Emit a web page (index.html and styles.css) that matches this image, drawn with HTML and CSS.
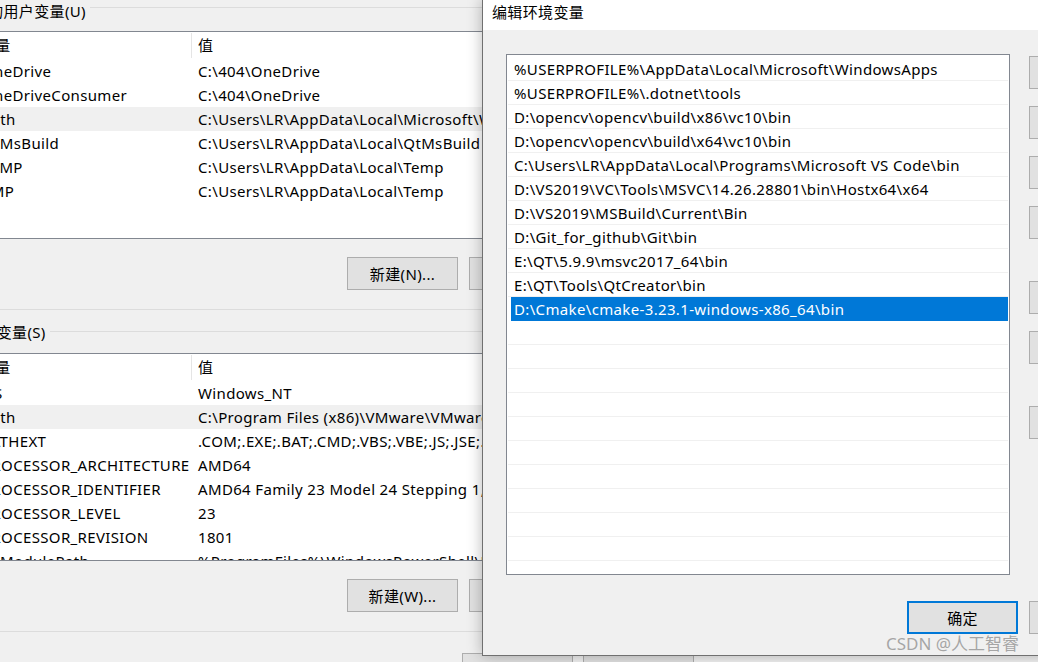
FILE: index.html
```html
<!DOCTYPE html>
<html lang="zh-CN">
<head>
  <meta charset="UTF-8" />
  <title>编辑环境变量</title>
  <link rel="stylesheet" href="styles.css">
</head>
<body>
  <div class="envwin">
    <section class="group">
      <div class="group-head">
        <span class="group-label">LR 的用户变量(U)</span>
        <span class="group-rule"></span>
      </div>
      <div class="var-list">
        <div class="var-row var-head"><span>变量</span><span>值</span></div>
        <div class="var-row"><span>OneDrive</span><span>C:\404\OneDrive</span></div>
        <div class="var-row"><span>OneDriveConsumer</span><span>C:\404\OneDrive</span></div>
        <div class="var-row current"><span>Path</span><span>C:\Users\LR\AppData\Local\Microsoft\WindowsApps;%USERPROFILE%\.dotnet\tools</span></div>
        <div class="var-row"><span>QtMsBuild</span><span>C:\Users\LR\AppData\Local\QtMsBuild</span></div>
        <div class="var-row"><span>TEMP</span><span>C:\Users\LR\AppData\Local\Temp</span></div>
        <div class="var-row"><span>TMP</span><span>C:\Users\LR\AppData\Local\Temp</span></div>
      </div>
      <div class="group-buttons">
        <button>新建(N)...</button>
        <button>编辑(E)...</button>
        <button>删除(D)</button>
      </div>
    </section>

    <section class="group system">
      <div class="group-head">
        <span class="group-label">系统变量(S)</span>
        <span class="group-rule"></span>
      </div>
      <div class="var-list">
        <div class="var-row var-head"><span>变量</span><span>值</span></div>
        <div class="var-row"><span>OS</span><span>Windows_NT</span></div>
        <div class="var-row current"><span>Path</span><span>C:\Program Files (x86)\VMware\VMware Workstation\bin\;C:\Windows\system32</span></div>
        <div class="var-row"><span>PATHEXT</span><span>.COM;.EXE;.BAT;.CMD;.VBS;.VBE;.JS;.JSE;.WSF;.WSH;.MSC</span></div>
        <div class="var-row"><span>PROCESSOR_ARCHITECTURE</span><span>AMD64</span></div>
        <div class="var-row"><span>PROCESSOR_IDENTIFIER</span><span>AMD64 Family 23 Model 24 Stepping 1, AuthenticAMD</span></div>
        <div class="var-row"><span>PROCESSOR_LEVEL</span><span>23</span></div>
        <div class="var-row"><span>PROCESSOR_REVISION</span><span>1801</span></div>
        <div class="var-row"><span>PSModulePath</span><span>%ProgramFiles%\WindowsPowerShell\Modules;C:\Windows\system32</span></div>
      </div>
      <div class="group-buttons">
        <button>新建(W)...</button>
        <button>编辑(I)...</button>
        <button>删除(L)</button>
      </div>
    </section>

    <div class="env-footer">
      <button>确定</button>
      <button>取消</button>
    </div>
  </div>

  <div class="dialog">
    <div class="dialog-title">编辑环境变量</div>
    <div class="dialog-body">
      <div class="path-list">
        <div class="path-row">%USERPROFILE%\AppData\Local\Microsoft\WindowsApps</div>
        <div class="path-row">%USERPROFILE%\.dotnet\tools</div>
        <div class="path-row">D:\opencv\opencv\build\x86\vc10\bin</div>
        <div class="path-row">D:\opencv\opencv\build\x64\vc10\bin</div>
        <div class="path-row">C:\Users\LR\AppData\Local\Programs\Microsoft VS Code\bin</div>
        <div class="path-row">D:\VS2019\VC\Tools\MSVC\14.26.28801\bin\Hostx64\x64</div>
        <div class="path-row">D:\VS2019\MSBuild\Current\Bin</div>
        <div class="path-row">D:\Git_for_github\Git\bin</div>
        <div class="path-row">E:\QT\5.9.9\msvc2017_64\bin</div>
        <div class="path-row">E:\QT\Tools\QtCreator\bin</div>
        <div class="path-row selected">D:\Cmake\cmake-3.23.1-windows-x86_64\bin</div>
        <div class="path-row"></div>
        <div class="path-row"></div>
        <div class="path-row"></div>
        <div class="path-row"></div>
        <div class="path-row"></div>
        <div class="path-row"></div>
        <div class="path-row"></div>
        <div class="path-row"></div>
        <div class="path-row"></div>
        <div class="path-row"></div>
        <div class="path-row"></div>
      </div>
      <div class="side-buttons">
        <button>新建(N)</button>
        <button>编辑(E)</button>
        <button>浏览(B)...</button>
        <button>删除(D)</button>
        <button class="spaced">上移(U)</button>
        <button>下移(O)</button>
        <button class="spaced">编辑文本(T)...</button>
      </div>
    </div>
    <div class="dialog-footer">
      <button class="primary">确定</button>
      <button>取消</button>
    </div>
  </div>

  <div class="watermark">CSDN @人工智睿</div>
</body>
</html>
```

FILE: styles.css
```css
body {
  margin: 0;
  width: 1038px;
  height: 662px;
  position: relative;
  overflow: hidden;
  background: #f0f0f0;
  font-family: "Noto Sans", "Noto Sans CJK SC", sans-serif;
  font-size: 15px;
  letter-spacing: 0.35px;
  color: #000;
}
button {
  font: inherit;
  letter-spacing: inherit;
  color: #000;
  width: 111px;
  height: 33px;
  padding: 0;
  background: #e1e1e1;
  border: 1px solid #adadad;
  white-space: nowrap;
}

/* background window: 环境变量 */
.envwin {
  position: absolute;
  left: -46px;
  top: 0;
  width: 1100px;
  height: 700px;
  background: #f0f0f0;
}
.group {
  width: 760px;
  border-bottom: 1px solid #dcdcdc;
}
.group + .group {
  margin-top: 14px;
}
.group-head {
  display: flex;
  align-items: flex-start;
  padding-left: 12px;
  height: 22px;
}
.group-label {
  line-height: 22px;
  white-space: nowrap;
  padding-right: 4px;
}
.system .group-label {
  line-height: 17px;
}
.group-rule {
  flex: 1;
  height: 1px;
  margin-top: 7px;
  background: #dcdcdc;
}
.var-list {
  margin: 9px 0 0 17px;
  width: 731px;
  height: 208px;
  box-sizing: border-box;
  border: 1px solid #828790;
  background: #fff;
  overflow: hidden;
}
.group + .group .var-list {
  margin-top: 7px;
}
.var-row {
  display: grid;
  grid-template-columns: 220px 1fr;
  height: 24px;
  line-height: 24px;
}
.var-row span {
  padding-left: 6px;
  white-space: nowrap;
  overflow: hidden;
}
.var-row span:first-child {
  padding-left: 10px;
}
.var-head {
  height: 27px;
  line-height: 27px;
}
.var-head span:first-child {
  border-right: 1px solid #e5e5e5;
  margin: 1px 0;
  line-height: 25px;
  padding-left: 8px;
}
.var-row.current {
  background: #f0f0f0;
}
.group-buttons {
  display: flex;
  justify-content: flex-end;
  gap: 11px;
  padding-right: 12px;
  margin: 18px 0 19px;
}
.env-footer {
  display: flex;
  gap: 10px;
  margin: 21px 0 0 508px;
}

/* front dialog: 编辑环境变量 */
.dialog {
  position: absolute;
  left: 482px;
  top: -1px;
  width: 669px;
  border: 1px solid #707070;
  background: #f0f0f0;
  box-shadow: 0 0 14px rgba(0, 0, 0, 0.28);
}
.dialog-title {
  height: 30px;
  box-sizing: border-box;
  padding: 0 9px;
  line-height: 24px;
  background: #fff;
}
.dialog-body {
  display: flex;
  gap: 19px;
  padding: 24px 12px 0 23px;
}
.path-list {
  width: 504px;
  height: 521px;
  flex: none;
  box-sizing: border-box;
  border: 1px solid #828790;
  background: #fff;
  padding: 2px 1px 0;
  overflow: hidden;
}
.path-row {
  height: 24px;
  box-sizing: border-box;
  line-height: 25px;
  padding-left: 6px;
  border-bottom: 1px solid #f0f0f0;
  white-space: nowrap;
}
.path-row.selected {
  background: #0078d7;
  border-bottom-color: #0078d7;
  color: #fff;
  margin-left: 3px;
  padding-left: 3px;
}
.side-buttons {
  display: flex;
  flex-direction: column;
  gap: 17px;
  margin-top: 2px;
}
.side-buttons .spaced {
  margin-top: 25px;
}
.dialog-footer {
  display: flex;
  justify-content: flex-end;
  gap: 11px;
  padding: 26px 12px 21px;
}
.dialog-footer .primary {
  border: 2px solid #0078d7;
}

.watermark {
  position: absolute;
  left: 886px;
  top: 633px;
  font-size: 17px;
  line-height: 22px;
  letter-spacing: 0;
  color: rgba(140, 140, 140, 0.75);
  white-space: nowrap;
}
```
